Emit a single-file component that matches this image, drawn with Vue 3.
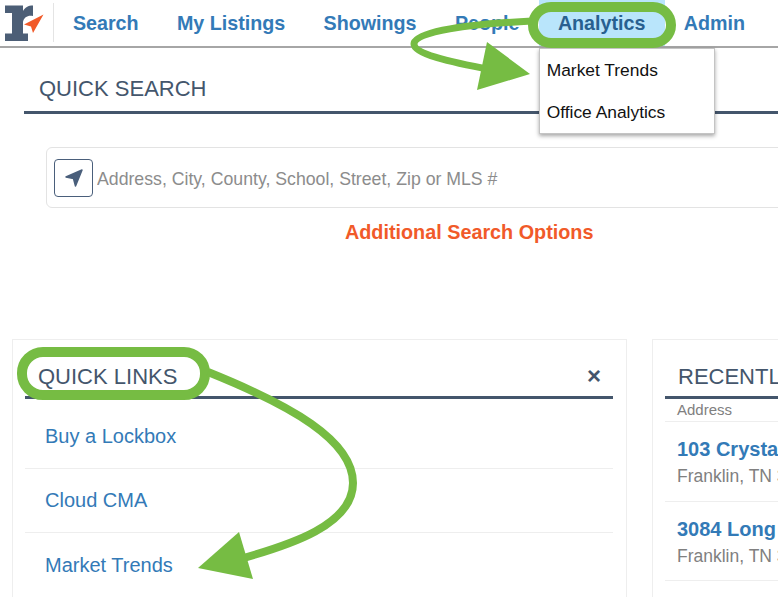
<template>
  <div class="page">
    <nav class="topnav">
      <a class="logo" href="#">
        <svg width="46" height="44" viewBox="0 0 46 44">
          <path fill="#4c5e76" d="M5 5.500 H23 V11 C25 7.500 28 5.500 33 5.500 V16 C28 15 24 17 23 22 V33.500 H28 V41 H5 V33.500 H12 V13 H5 Z" />
          <path fill="#f15a29" d="M43.500 14.500 L33 33 L31 26.500 L24 24.500 Z" />
        </svg>
      </a>
      <div v-for="item in navItems" :key="item" class="nav-item" :class="{ active: item === 'Analytics' }">
        <a href="#">{{ item }}</a>
        <div v-if="item === 'Analytics'" class="dropdown">
          <a href="#">Market Trends</a>
          <a href="#">Office Analytics</a>
        </div>
      </div>
    </nav>

    <section class="quick-search">
      <h2 class="section-title">QUICK SEARCH</h2>
      <div class="search-box">
        <button class="locate-btn">
          <svg width="20" height="20" viewBox="0 0 20 20">
            <path fill="#4a5f7b" stroke="#4a5f7b" stroke-width="1.500" stroke-linejoin="round" d="M18 2 L11.500 18 L9.500 10.500 L2 9 Z" />
          </svg>
        </button>
        <input class="search-input" type="text" placeholder="Address, City, County, School, Street, Zip or MLS #" />
      </div>
      <a class="more-options" href="#">Additional Search Options</a>
    </section>

    <div class="panels">
      <section class="panel links-panel">
        <header class="panel-head">
          <h2 class="section-title">QUICK LINKS</h2>
          <span class="close">×</span>
        </header>
        <div class="link-list">
          <a v-for="link in quickLinks" :key="link" class="link-row" href="#">{{ link }}</a>
        </div>
      </section>

      <section class="panel recent-panel">
        <header class="panel-head">
          <h2 class="section-title">RECENTLY VIEWED</h2>
        </header>
        <div class="col-label">Address</div>
        <div v-for="row in recent" :key="row.street" class="recent-row">
          <a href="#">{{ row.street }}</a>
          <span>{{ row.city }}</span>
        </div>
      </section>
    </div>

    <!-- green callouts drawn over the screenshot -->
    <svg class="callouts" width="778" height="597" viewBox="0 0 778 597">
      <g fill="none" stroke="#76bc43">
        <rect x="533" y="7" width="138" height="36" rx="18" stroke-width="10" />
        <path d="M532 21 C470 24 414 31 414 44 C414 54 450 62 492 70" stroke-width="7" />
        <rect x="22" y="352" width="183" height="43" rx="21" stroke-width="10" />
        <path d="M208 372 C290 405 353 440 353 483 C353 525 290 545 240 559" stroke-width="8" />
      </g>
      <g fill="#76bc43">
        <path d="M487 42 L530 74 L477 90 Z" />
        <path d="M239 532 L198 568 L253 579 Z" />
      </g>
    </svg>
  </div>
</template>

<script setup>
const navItems = ['Search', 'My Listings', 'Showings', 'People', 'Analytics', 'Admin']
const quickLinks = ['Buy a Lockbox', 'Cloud CMA', 'Market Trends']
const recent = [
  { street: '103 Crystal', city: 'Franklin, TN 37064' },
  { street: '3084 Long', city: 'Franklin, TN 37064' }
]
</script>

<style>
html,
body {
  margin: 0;
  background: #fff;
  overflow: hidden;
}
</style>

<style scoped>
.page {
  position: relative;
  width: 778px;
  height: 597px;
  overflow: hidden;
  background: #fff;
  font-family: "Liberation Sans", Arial, sans-serif;
}

a {
  text-decoration: none;
}

.topnav {
  display: flex;
  height: 46px;
  border-bottom: 2px solid #a6a6a6;
  white-space: nowrap;
}

.logo {
  position: relative;
  display: block;
  width: 53.700px;
  height: 44px;
  flex-shrink: 0;
}

.logo svg {
  display: block;
}

.logo::after {
  content: "";
  position: absolute;
  right: 0;
  top: 3px;
  bottom: 2px;
  width: 1px;
  background: #e4e4e4;
}

.nav-item {
  position: relative;
  padding: 0 19.200px;
  line-height: 47px;
  font-size: 19.700px;
  font-weight: bold;
}

.nav-item > a {
  color: #337ab7;
}

.nav-item.active {
  background: #b9e5fb;
}

.nav-item.active > a {
  color: #286090;
}

.dropdown {
  position: absolute;
  left: 0;
  top: 48px;
  z-index: 2;
  width: 176px;
  height: 86px;
  box-sizing: border-box;
  background: #fff;
  border: 1px solid #c4c4c4;
  box-shadow: 0 2px 4px rgba(0, 0, 0, 0.35);
  font-weight: normal;
  font-size: 17.400px;
}

.dropdown a {
  display: block;
  height: 42px;
  line-height: 42px;
  padding-left: 7px;
  color: #111;
}

.section-title {
  margin: 0;
  font-size: 22px;
  font-weight: normal;
  line-height: 28px;
  color: #44566c;
  white-space: nowrap;
}

.quick-search {
  padding: 27px 0 0 24px;
}

.quick-search .section-title {
  padding: 0 0 8px 15px;
  border-bottom: 3px solid #44566c;
}

.search-box {
  display: flex;
  align-items: center;
  gap: 4px;
  width: 780px;
  height: 61px;
  box-sizing: border-box;
  margin: 33px 0 0 22px;
  padding-left: 7px;
  border: 1px solid #e3e3e3;
  border-radius: 6px;
}

.locate-btn {
  display: flex;
  align-items: center;
  justify-content: center;
  width: 39px;
  height: 38px;
  margin-top: 1px;
  padding: 0;
  background: #fff;
  border: 1px solid #4a5f7b;
  border-radius: 4px;
}

.search-input {
  flex: 1;
  border: none;
  outline: none;
  padding: 4px 0 0;
  font-family: inherit;
  font-size: 17.700px;
}

.search-input::placeholder {
  color: #8c8c8c;
  opacity: 1;
}

.more-options {
  display: block;
  margin: 12px 0 0 321px;
  font-size: 19.800px;
  font-weight: bold;
  line-height: 24px;
  color: #f15a29;
}

.panels {
  display: flex;
  gap: 25px;
  margin-top: 95px;
  padding-left: 12px;
}

.panel {
  flex-shrink: 0;
  box-sizing: border-box;
  height: 300px;
  padding: 21px 13px 0 12px;
  border: 1px solid #eee;
}

.links-panel {
  width: 615px;
}

.recent-panel {
  width: 300px;
}

.panel-head {
  display: flex;
  justify-content: space-between;
  align-items: flex-start;
  height: 33px;
  padding-top: 2px;
  border-bottom: 3px solid #44566c;
}

.panel-head .section-title {
  padding-left: 13px;
}

.close {
  padding-right: 12px;
  font-size: 24px;
  line-height: 26px;
  font-weight: bold;
  color: #44566c;
}

.link-list {
  padding-top: 6px;
}

.link-row {
  display: block;
  height: 63px;
  line-height: 63px;
  padding-left: 20px;
  border-bottom: 1px solid #eee;
  font-size: 20px;
  color: #337ab7;
}

.link-row:last-child {
  border-bottom: none;
  line-height: 65px;
}

.col-label {
  height: 22px;
  line-height: 21px;
  padding-left: 12px;
  border-bottom: 1px solid #eee;
  font-size: 15px;
  color: #808080;
}

.recent-row {
  height: 79.500px;
  box-sizing: border-box;
  padding: 14px 0 0 12px;
  border-bottom: 1px solid #eee;
  white-space: nowrap;
}

.recent-row a {
  display: block;
  margin-bottom: 1px;
  line-height: 26px;
  font-size: 20px;
  font-weight: bold;
  color: #337ab7;
}

.recent-row span {
  display: block;
  line-height: 26px;
  font-size: 17.500px;
  color: #808080;
}

.callouts {
  position: absolute;
  left: 0;
  top: 0;
  z-index: 3;
  pointer-events: none;
}
</style>
